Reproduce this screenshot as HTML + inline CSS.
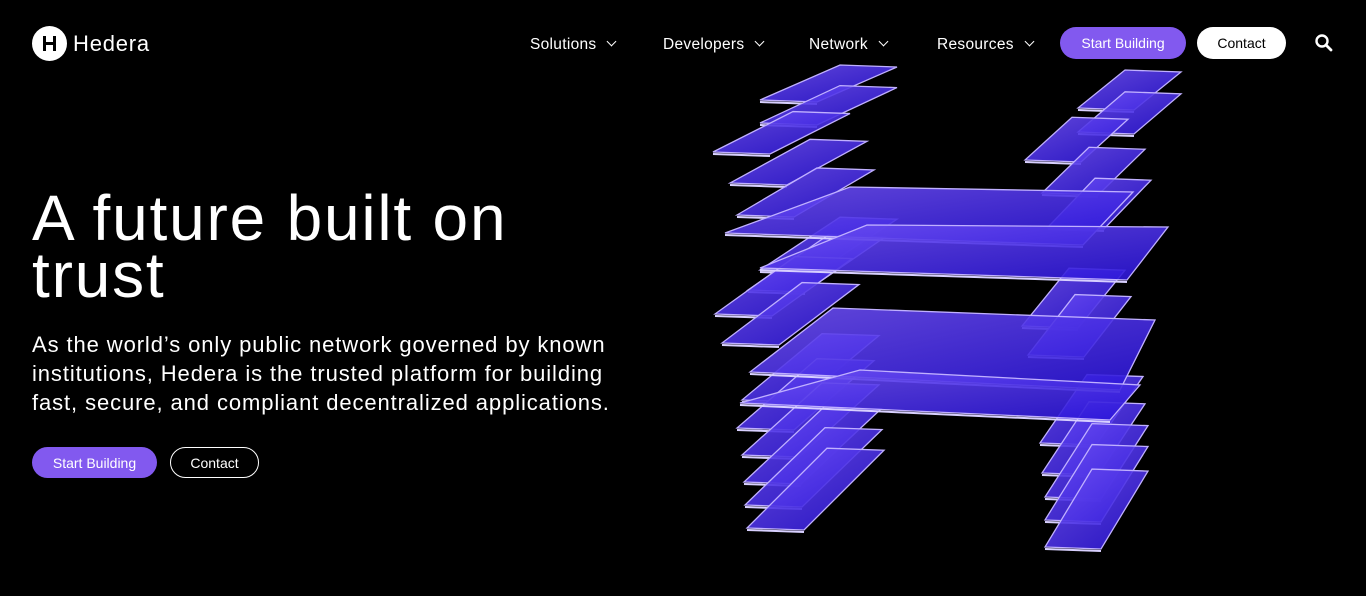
<!DOCTYPE html>
<html><head><meta charset="utf-8"><style>
*{margin:0;padding:0;box-sizing:border-box}
body{width:1366px;height:596px;background:#000;color:#fff;font-family:"Liberation Sans",sans-serif;overflow:hidden;position:relative}
.logo{position:absolute;left:32px;top:26px;display:flex;align-items:center}
.logo .c{width:35px;height:35px;border-radius:50%;background:#fff;position:relative}
.logo .c:before,.logo .c:after{content:"";position:absolute;top:10px;width:3px;height:15px;background:#000}
.logo .c:before{left:11px}.logo .c:after{right:11px}
.logo .c i{position:absolute;left:11px;right:11px;height:2.5px;background:#000}
.logo span{font-size:22px;margin-left:6px;letter-spacing:.8px}
.nav{position:absolute;top:36px;font-size:15.5px;letter-spacing:.3px}
.nav:after{content:"";display:inline-block;width:6px;height:6px;border-right:1.5px solid #fff;border-bottom:1.5px solid #fff;transform:rotate(45deg);margin-left:12px;position:relative;top:-4px}
.btn{position:absolute;border-radius:16px;font-size:14px;display:flex;align-items:center;justify-content:center}
.p{background:#8259ef;color:#fff}
h1{position:absolute;left:32px;top:190px;font-weight:300;font-size:64px;line-height:57px;letter-spacing:1.8px}
p.s{position:absolute;left:32px;top:330px;font-size:22px;line-height:29px;width:590px;letter-spacing:.9px}
</style></head><body>
<div class="logo"><div class="c"><i style="top:16px"></i></div><span>Hedera</span></div>
<div class="nav" style="left:530px">Solutions</div>
<div class="nav" style="left:663px">Developers</div>
<div class="nav" style="left:809px">Network</div>
<div class="nav" style="left:937px">Resources</div>
<div class="btn p" style="left:1060px;top:27px;width:126px;height:32px">Start Building</div>
<div class="btn" style="left:1197px;top:27px;width:89px;height:32px;background:#fff;color:#000">Contact</div>
<svg style="position:absolute;left:1314px;top:33px" width="20" height="20" viewBox="0 0 20 20"><circle cx="8" cy="8" r="5.5" fill="none" stroke="#fff" stroke-width="2.4"/><path d="M12 12l5 5" stroke="#fff" stroke-width="2.8" stroke-linecap="round"/></svg>
<h1>A future built on<br>trust</h1>
<p class="s">As the world’s only public network governed by known institutions, Hedera is the trusted platform for building fast, secure, and compliant decentralized applications.</p>
<div class="btn p" style="left:32px;top:447px;width:125px;height:31px">Start Building</div>
<div class="btn" style="left:170px;top:447px;width:89px;height:31px;border:1px solid #fff">Contact</div>
<svg id="h" style="position:absolute;left:0;top:0" width="1366" height="596"></svg>
<script>
var s=document.getElementById('h'),o='<defs><linearGradient id="g" x1="0" y1="0" x2="1" y2="1"><stop offset="0" stop-color="#6d4ff2"/><stop offset="1" stop-color="#2a14d8"/></linearGradient></defs>';
function pl(a,b,c,d){o+='<polygon points="'+a+' '+b+' '+c+' '+d+'" fill="url(#g)" fill-opacity=".9" stroke="#c0b0ff" stroke-width="1.3"/>';o+='<line x1="'+a.split(',')[0]+'" y1="'+(+a.split(',')[1]+2)+'" x2="'+b.split(',')[0]+'" y2="'+(+b.split(',')[1]+2)+'" stroke="#d8d0ff" stroke-width="2"/>';}
function sm(x,y,w,dx,dy){pl(x+','+y,(x+w)+','+(y+2),(x+w+dx)+','+(y+2+dy),(x+dx)+','+(y+dy));}
var L=[[760,100],[760,123],[713,152],[730,183],[737,215],[760,270],[748,290],[715,314],[722,343],[742,400],[737,428],[742,455],[744,482],[745,505],[747,528]];
var R=[[1078,108],[1078,132],[1025,160],[1042,193],[1048,227],[1022,326],[1028,355],[1040,443],[1042,473],[1045,497],[1045,520],[1045,547]];
L.forEach(function(p){var t=(p[1]-100)/430;sm(p[0],p[1],57,80,-(35+t*45));});
R.forEach(function(p){var t=(p[1]-108)/440;sm(p[0],p[1],56,47,-(38+t*40));});
pl('725,233','1083,245','1133,192','850,187');
pl('760,268','1127,280','1168,227','867,225');
pl('750,372','1120,390','1155,320','833,308');
pl('740,403','1110,420','1140,385','860,370');
s.innerHTML=o;
</script>
</body></html>
